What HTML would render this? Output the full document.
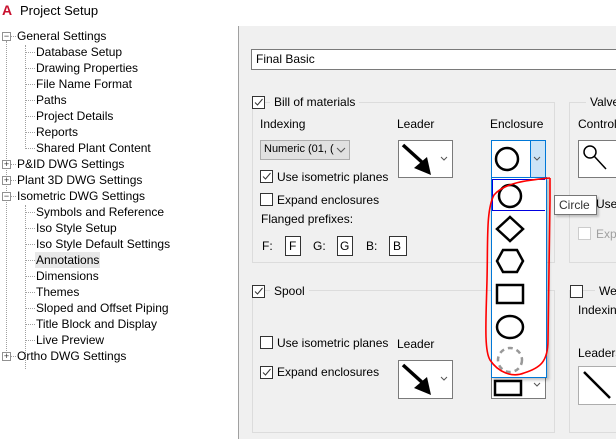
<!DOCTYPE html>
<html><head><meta charset="utf-8"><style>
*{margin:0;padding:0;box-sizing:border-box}
body{width:616px;height:439px;overflow:hidden;background:#fff;font-family:"Liberation Sans",sans-serif;font-size:12px;color:#000;position:relative}
.a{position:absolute;white-space:nowrap}
.t{position:absolute;white-space:nowrap;line-height:16px}
.cb{position:absolute;width:13px;height:13px;border:1px solid #333;background:#fff}
.box{position:absolute;border:1px solid #7a7a7a;background:#fff}
.grp{position:absolute;border:1px solid #dcdcdc}
.lbl{position:absolute;white-space:nowrap;background:#f0f0f0;padding:0 4px;line-height:14px}
.pm{position:absolute;width:9px;height:9px;border:1px solid #919191;background:#fff;font-size:9px;line-height:7px;text-align:center;color:#333}
</style></head><body>
<div class="a" style="left:2px;top:2px;color:#c8102e;font-weight:bold;font-size:14px">A</div>
<div class="a" style="left:20px;top:3px;font-size:13px">Project Setup</div>
<div class="a" style="left:0;top:26px;width:239px;height:413px;border-right:1px solid #a0a0a0;background:#fff"></div>
<div class="a" style="left:6px;top:41px;height:316px;border-left:1px dotted #a0a0a0"></div>
<div class="a" style="left:25px;top:45px;height:104px;border-left:1px dotted #a0a0a0"></div>
<div class="a" style="left:25px;top:205px;height:164px;border-left:1px dotted #a0a0a0"></div>
<div id="tree"></div>
<div class="a" style="left:239px;top:26px;width:377px;height:413px;background:#f0f0f0"></div>
<div class="box" style="left:251px;top:49px;width:370px;height:21px;border-color:#7a7a7a"></div>
<div class="a" style="left:256px;top:52px">Final Basic</div>
<div class="grp" style="left:252px;top:102px;width:303px;height:161px"></div>
<div class="lbl" style="left:270px;top:95px">Bill of materials</div>
<div class="cb" style="left:252px;top:96px;border-color:#333">
<svg width="11" height="11" style="position:absolute;left:0;top:0"><path d="M2 5.5 L4.5 8 L9.5 2" stroke="#333" fill="none" stroke-width="1"/></svg></div>
<div class="a" style="left:260px;top:117px">Indexing</div>
<div class="a" style="left:397px;top:117px">Leader</div>
<div class="a" style="left:490px;top:117px">Enclosure</div>
<div class="box" style="left:260px;top:140px;width:90px;height:20px;background:#e1e1e1;border-color:#adadad"></div>
<div class="a" style="left:264px;top:143px;font-size:11px">Numeric (01, (</div>
<svg class="a" style="left:336px;top:146px" width="10" height="8"><path d="M1 2 L5 6 L9 2" stroke="#555" fill="none"/></svg>
<div class="cb" style="left:260px;top:170px"><svg width="11" height="11" style="position:absolute"><path d="M2 5.5 L4.5 8 L9.5 2" stroke="#333" fill="none"/></svg></div>
<div class="a" style="left:277px;top:170px">Use isometric planes</div>
<div class="cb" style="left:260px;top:193px"></div>
<div class="a" style="left:277px;top:193px">Expand enclosures</div>
<div class="a" style="left:261px;top:212px">Flanged prefixes:</div>
<div class="a" style="left:262px;top:239px">F:</div>
<div class="box" style="left:285px;top:236px;width:16px;height:20px;border-color:#333"></div><div class="a" style="left:289px;top:239px">F</div>
<div class="a" style="left:313px;top:239px">G:</div>
<div class="box" style="left:337px;top:236px;width:16px;height:20px;border-color:#333"></div><div class="a" style="left:340px;top:239px">G</div>
<div class="a" style="left:366px;top:239px">B:</div>
<div class="box" style="left:389px;top:236px;width:18px;height:20px;border-color:#333"></div><div class="a" style="left:393px;top:239px">B</div>
<div class="box" style="left:398px;top:140px;width:55px;height:38px"></div>
<svg class="a" style="left:400px;top:142px" width="52" height="34"><path d="M3 3 L24 22" stroke="#000" stroke-width="3.5"/><path d="M14 26 L31 33 L27 15 Z" fill="#000"/><path d="M41 15 L44 18 L47 15" stroke="#555" fill="none"/></svg>
<div class="box" style="left:491px;top:140px;width:55px;height:38px;border-color:#0078d7"></div>
<div class="a" style="left:530px;top:141px;width:15px;height:36px;background:#cce4f7;border-left:1px solid #0078d7"></div>
<svg class="a" style="left:492px;top:141px" width="53" height="36"><circle cx="15" cy="18" r="11" stroke="#000" stroke-width="2.5" fill="none"/><path d="M42 16 L45 19 L48 16" stroke="#555" fill="none"/></svg>
<div class="grp" style="left:569px;top:102px;width:60px;height:161px"></div>
<div class="lbl" style="left:586px;top:95px">Valve</div>
<div class="a" style="left:578px;top:117px">Control</div>
<div class="box" style="left:578px;top:140px;width:50px;height:38px"></div>
<svg class="a" style="left:580px;top:142px" width="36" height="34"><circle cx="10" cy="10" r="6" stroke="#000" stroke-width="1.5" fill="none"/><path d="M14 14 L26 27" stroke="#000" stroke-width="1.5"/></svg>
<div class="a" style="left:596px;top:197px">Use</div>
<div class="cb" style="left:578px;top:227px;border-color:#ccc"></div>
<div class="a" style="left:596px;top:227px;color:#a0a0a0">Expa</div>
<div class="grp" style="left:252px;top:290px;width:303px;height:143px"></div>
<div class="lbl" style="left:270px;top:284px">Spool</div>
<div class="cb" style="left:252px;top:285px"><svg width="11" height="11" style="position:absolute"><path d="M2 5.5 L4.5 8 L9.5 2" stroke="#333" fill="none"/></svg></div>
<div class="cb" style="left:260px;top:336px"></div>
<div class="a" style="left:277px;top:336px">Use isometric planes</div>
<div class="a" style="left:397px;top:337px">Leader</div>
<div class="cb" style="left:260px;top:366px"><svg width="11" height="11" style="position:absolute"><path d="M2 5.5 L4.5 8 L9.5 2" stroke="#333" fill="none"/></svg></div>
<div class="a" style="left:277px;top:365px">Expand enclosures</div>
<div class="box" style="left:398px;top:360px;width:55px;height:39px"></div>
<svg class="a" style="left:400px;top:362px" width="52" height="34"><path d="M3 3 L24 22" stroke="#000" stroke-width="3.5"/><path d="M14 26 L31 33 L27 15 Z" fill="#000"/><path d="M41 15 L44 18 L47 15" stroke="#555" fill="none"/></svg>
<div class="box" style="left:491px;top:360px;width:55px;height:39px"></div>
<svg class="a" style="left:492px;top:361px" width="53" height="37"><rect x="3" y="20" width="26" height="14" stroke="#000" stroke-width="2.5" fill="none"/><path d="M42 22 L45 25 L48 22" stroke="#555" fill="none"/></svg>
<div class="grp" style="left:569px;top:290px;width:60px;height:143px"></div>
<div class="cb" style="left:570px;top:285px"></div>
<div class="lbl" style="left:595px;top:284px">We</div>
<div class="a" style="left:578px;top:303px">Indexing</div>
<div class="a" style="left:578px;top:346px">Leaders</div>
<div class="box" style="left:578px;top:366px;width:50px;height:39px;border-color:#adadad"></div>
<svg class="a" style="left:580px;top:368px" width="36" height="34"><path d="M4 4 L30 30" stroke="#000" stroke-width="2.5"/></svg>
<div class="a" style="left:491px;top:177px;width:56px;height:201px;background:#fff;border:1px solid #0078d7;box-shadow:2px 2px 3px rgba(0,0,0,.25)"></div>
<div class="a" style="left:492px;top:179px;width:53px;height:32px;border:1px solid #0000e0;border-top:none;border-right:none"></div>
<div class="a" style="left:492px;top:179px;width:53px;height:1px;background:#0000e0"></div>
<div class="a" style="left:539px;top:210px;width:6px;height:1px;background:#0000e0"></div>
<svg class="a" style="left:491px;top:177px" width="56" height="200">
<circle cx="19" cy="19" r="11" stroke="#000" stroke-width="2.5" fill="none"/>
<path d="M19 40 L32 52 L19 64 L6 52 Z" stroke="#000" stroke-width="2.5" fill="none"/>
<path d="M12 73 L26 73 L32 84 L26 95 L12 95 L6 84 Z" stroke="#000" stroke-width="2.5" fill="none"/>
<rect x="6" y="108" width="26" height="18" stroke="#000" stroke-width="2.5" fill="none"/>
<ellipse cx="19" cy="150" rx="13" ry="11" stroke="#000" stroke-width="2.5" fill="none"/>
<circle cx="19" cy="183" r="12" stroke="#999" stroke-width="2.5" stroke-dasharray="5 4" fill="none"/>
</svg>
<div class="a" style="left:554px;top:195px;width:43px;height:20px;background:#fff;border:1px solid #767676;box-shadow:2px 2px 2px rgba(0,0,0,.2);font-size:12px;line-height:18px;padding-left:4px;color:#333">Circle</div>
<svg class="a" style="left:0;top:0" width="616" height="439"><path d="M550 178 C530 180 505 182 494 195 C486 210 488 240 487 280 C486 320 484 350 490 360 C498 372 512 378 524 373 C540 368 548 362 548 340 C549 300 549 240 550 200 L550 178" stroke="#f00" stroke-width="1.6" fill="none"/></svg>
<script>
var items=[["General Settings",0,"-"],["Database Setup",1],["Drawing Properties",1],["File Name Format",1],["Paths",1],["Project Details",1],["Reports",1],["Shared Plant Content",1],["P&ID DWG Settings",0,"+"],["Plant 3D DWG Settings",0,"+"],["Isometric DWG Settings",0,"-"],["Symbols and Reference",1],["Iso Style Setup",1],["Iso Style Default Settings",1],["Annotations",1],["Dimensions",1],["Themes",1],["Sloped and Offset Piping",1],["Title Block and Display",1],["Live Preview",1],["Ortho DWG Settings",0,"+"]];
var h="";items.forEach(function(it,i){var y=28+i*16;
if(it[1]){h+='<div class="a" style="left:26px;top:'+(y+8)+'px;width:9px;border-top:1px dotted #a0a0a0"></div>';
h+='<div class="t" style="left:35px;top:'+y+'px;padding:0 1px;'+(it[0]=="Annotations"?'background:#e8e8e8':'')+'">'+it[0].replace("&","&amp;")+'</div>';}
else{h+='<div class="a" style="left:11px;top:'+(y+8)+'px;width:5px;border-top:1px dotted #a0a0a0"></div>';
h+='<div class="pm" style="left:2px;top:'+(y+4)+'px">'+(it[2]=="-"?"&minus;":"+")+'</div>';
h+='<div class="t" style="left:17px;top:'+y+'px">'+it[0].replace("&","&amp;")+'</div>';}});
document.getElementById("tree").innerHTML=h;
</script>
</body></html>
